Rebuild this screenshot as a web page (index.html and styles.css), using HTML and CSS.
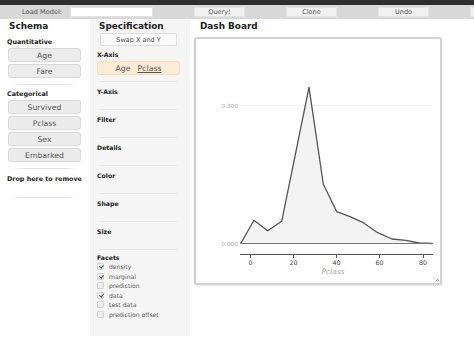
FILE: index.html
```html
<!DOCTYPE html>
<html lang="en">
<head>
    <meta charset="UTF-8">
    <title>Dash Board</title>
    <link rel="stylesheet" href="styles.css">
</head>
<body>
    <div class="topbar">
        <label class="load-label" for="model">Load Model:</label>
        <input type="text" id="model" class="load-input">
        <button class="top-btn">Query!</button>
        <button class="top-btn">Clone</button>
        <button class="top-btn">Undo</button>
        <button class="top-btn"></button>
    </div>

    <div class="main">
        <div class="schema">
            <h2 class="col-title">Schema</h2>

            <div class="group">
                <div class="group-title">Quantitative</div>
                <button class="field">Age</button>
                <button class="field">Fare</button>
            </div>
            <hr class="sep">

            <div class="group">
                <div class="group-title cat">Categorical</div>
                <button class="field">Survived</button>
                <button class="field">Pclass</button>
                <button class="field">Sex</button>
                <button class="field">Embarked</button>
            </div>
            <hr class="sep">

            <div class="trash">Drop here to remove</div>
            <hr class="sep">
        </div>

        <div class="spec">
            <h2 class="col-title">Specification</h2>
            <button class="swap-btn">Swap X and Y</button>

            <div class="shelf-title x-title">X-Axis</div>
            <div class="pill">
                <span>Age</span>
                <span class="pill-link">Pclass</span>
            </div>
            <hr class="shelf-line x-line">

            <div class="shelf">
                <div class="shelf-title">Y-Axis</div>
                <div class="shelf-drop"></div>
                <hr class="shelf-line">
            </div>
            <div class="shelf">
                <div class="shelf-title">Filter</div>
                <div class="shelf-drop"></div>
                <hr class="shelf-line">
            </div>
            <div class="shelf">
                <div class="shelf-title">Details</div>
                <div class="shelf-drop"></div>
                <hr class="shelf-line">
            </div>
            <div class="shelf">
                <div class="shelf-title">Color</div>
                <div class="shelf-drop"></div>
                <hr class="shelf-line">
            </div>
            <div class="shelf">
                <div class="shelf-title">Shape</div>
                <div class="shelf-drop"></div>
                <hr class="shelf-line">
            </div>
            <div class="shelf">
                <div class="shelf-title">Size</div>
                <div class="shelf-drop"></div>
                <hr class="shelf-line">
            </div>

            <div class="facets">
                <div class="shelf-title">Facets</div>
                <div class="facet"><span class="check on"></span>density</div>
                <div class="facet"><span class="check on"></span>marginal</div>
                <div class="facet"><span class="check"></span>prediction</div>
                <div class="facet"><span class="check on"></span>data</div>
                <div class="facet"><span class="check"></span>test data</div>
                <div class="facet"><span class="check"></span>prediction offset</div>
            </div>
        </div>

        <div class="dash">
            <h2 class="col-title">Dash Board</h2>
            <div class="chart">
                <svg class="plot" viewBox="196 39 244 244" width="244" height="244">
                    <!-- y grid -->
                    <line x1="240" y1="105.5" x2="432" y2="105.5" stroke="#f0f0f0" stroke-width="1"/>
                    <text x="238" y="107.5" text-anchor="end" class="y-tick">0.300</text>
                    <text x="238" y="245.5" text-anchor="end" class="y-tick">0.000</text>

                    <!-- density -->
                    <path d="M240.7,243.5 L254,220.3 L267.7,230.7 L281.7,221.3 L309,87.3 L323.3,184 L336.7,211.7 L350,216.7 L363.3,222.7 L377.7,232.7 L392,239 L406,240.3 L419.3,243 L432.7,243.5 Z"
                          fill="#f3f3f3" stroke="none"/>
                    <path d="M240.7,243.5 L254,220.3 L267.7,230.7 L281.7,221.3 L309,87.3 L323.3,184 L336.7,211.7 L350,216.7 L363.3,222.7 L377.7,232.7 L392,239 L406,240.3 L419.3,243 L432.7,243.5"
                          fill="none" stroke="#555" stroke-width="1.3" stroke-linejoin="round"/>
                    <line x1="240" y1="243.5" x2="433" y2="243.5" stroke="#777" stroke-width="1"/>

                    <!-- x axis -->
                    <line x1="240" y1="254.5" x2="433" y2="254.5" stroke="#555" stroke-width="1"/>
                    <g stroke="#555" stroke-width="1">
                        <line x1="250.5" y1="254.5" x2="250.5" y2="258"/>
                        <line x1="293.5" y1="254.5" x2="293.5" y2="258"/>
                        <line x1="336.5" y1="254.5" x2="336.5" y2="258"/>
                        <line x1="379.5" y1="254.5" x2="379.5" y2="258"/>
                        <line x1="423.5" y1="254.5" x2="423.5" y2="258"/>
                    </g>
                    <g class="x-tick" text-anchor="middle">
                        <text x="250.5" y="265">0</text>
                        <text x="293.5" y="265">20</text>
                        <text x="336.5" y="265">40</text>
                        <text x="379.5" y="265">60</text>
                        <text x="423" y="265">80</text>
                    </g>
                    <text x="333" y="273.5" text-anchor="middle" class="x-label">Pclass</text>

                    <!-- resize grip -->
                    <g stroke="#888" stroke-width="0.8">
                        <line x1="438.5" y1="278.5" x2="435.5" y2="281.5"/>
                        <line x1="438.5" y1="280.5" x2="437.5" y2="281.5"/>
                    </g>
                </svg>
            </div>
        </div>
    </div>
</body>
</html>
```

FILE: styles.css
```css
body {
    margin: 0;
    font-family: "DejaVu Sans", "Noto Sans", sans-serif;
    color: #333;
    background: white;
}

button {
    font-family: inherit;
    cursor: pointer;
}

/* top toolbar */
.topbar {
    border-top: 5px solid #2e2e2e;
    background-color: #d8d8d8;
    height: 14px;
    display: flex;
    align-items: center;
    padding-left: 20px;
    font-size: 6.6px;
    color: #555;
    overflow: hidden;
    white-space: nowrap;
}

.load-label {
    flex: none;
    width: 42px;
    text-align: right;
}

.load-input {
    flex: none;
    width: 83px;
    height: 10px;
    box-sizing: border-box;
    margin: 0 0 0 8px;
    border: 1px solid #e2e2e2;
    background: white;
    padding: 0;
}

.top-btn {
    flex: none;
    width: 51px;
    height: 10px;
    margin-left: 41px;
    padding: 0;
    border: 1px solid #e4e4e4;
    background-color: #f1f1f1;
    font-size: 6.5px;
    line-height: 8px;
    color: #555;
}

/* columns */
.main {
    display: grid;
    grid-template-columns: 88px 100px 1fr;
    column-gap: 2px;
}

.col-title {
    margin: 0;
    font-size: 8.9px;
    font-weight: bold;
    line-height: 14px;
    color: #222;
}

/* schema */
.schema {
    padding: 0 7px 0 8px;
}

.schema .col-title {
    padding-left: 1px;
}

.group-title {
    font-size: 6.4px;
    font-weight: bold;
    line-height: 9px;
    margin: 5px 0 1px -1px;
    color: #222;
}

.group-title.cat {
    margin-top: 5px;
}

.field {
    display: block;
    width: 73px;
    height: 14px;
    margin: 0 0 2px;
    padding: 0;
    box-sizing: border-box;
    border: 1px solid #d9d9d9;
    border-radius: 3px;
    background-color: #ececec;
    font-size: 7.7px;
    color: #555;
}

.group {
    padding-bottom: 4px;
}

.sep {
    border: none;
    height: 1px;
    margin: 0 2px;
    background: linear-gradient(to right, rgba(220, 220, 220, 0), #e2e2e2 20%, #e2e2e2 80%, rgba(220, 220, 220, 0));
}

.trash {
    font-size: 6.4px;
    font-weight: bold;
    line-height: 9px;
    margin: 6px 0 0 -1px;
    padding-bottom: 13px;
    color: #222;
    white-space: nowrap;
}

/* specification */
.spec {
    background-color: #f5f5f5;
    height: 317px;
    padding: 0 10px 0 7px;
}

.spec .col-title {
    padding-left: 2px;
}

.swap-btn {
    display: block;
    width: 77px;
    height: 13px;
    margin-left: 3px;
    padding: 0;
    border: 1px solid #dedede;
    border-radius: 2px;
    background-color: #fafafa;
    font-size: 6.5px;
    color: #555;
}

.shelf-title {
    font-size: 6.2px;
    font-weight: bold;
    line-height: 9px;
    color: #222;
}

.x-title {
    margin-top: 4px;
}

.pill {
    margin-top: 2px;
    height: 14px;
    box-sizing: border-box;
    border: 1px solid #f6dcbc;
    border-radius: 3px;
    background-color: #fdebd6;
    display: flex;
    justify-content: center;
    align-items: center;
    gap: 7px;
    font-size: 7.8px;
    color: #555;
}

.pill-link {
    text-decoration: underline;
}

.shelf-line {
    border: none;
    height: 1px;
    margin: 0 3px;
    background-color: #e6e6e6;
}

.x-line {
    margin-top: 6px;
}

.shelf {
    padding-top: 5px;
}

.shelf-drop {
    height: 13px;
}

.facets {
    padding-top: 3px;
}

.facet {
    display: flex;
    align-items: center;
    font-size: 6.1px;
    line-height: 9.5px;
    color: #555;
    white-space: nowrap;
}

.check {
    position: relative;
    flex: none;
    width: 5px;
    height: 5px;
    margin-right: 5px;
    border: 1px solid #d4d4d4;
    border-radius: 1px;
    background-color: #efefef;
}

.check.on::after {
    content: "";
    position: absolute;
    left: 1.5px;
    top: 0;
    width: 1.5px;
    height: 3px;
    border-right: 1px solid #444;
    border-bottom: 1px solid #444;
    transform: rotate(40deg);
}

/* dashboard */
.dash {
    padding-left: 2px;
}

.dash .col-title {
    padding-left: 6px;
}

.chart {
    margin-top: 4px;
    width: 248px;
    height: 248px;
    box-sizing: border-box;
    border: 2px solid #d2d2d2;
    border-radius: 3px;
    box-shadow: 0 1px 2px rgba(0, 0, 0, 0.12);
    background: white;
}

.plot {
    display: block;
}

.y-tick {
    font-size: 5.8px;
    fill: #aaa;
}

.x-tick {
    font-size: 6.3px;
    fill: #444;
}

.x-label {
    font-size: 7.4px;
    font-style: italic;
    fill: #aaa;
}
```
